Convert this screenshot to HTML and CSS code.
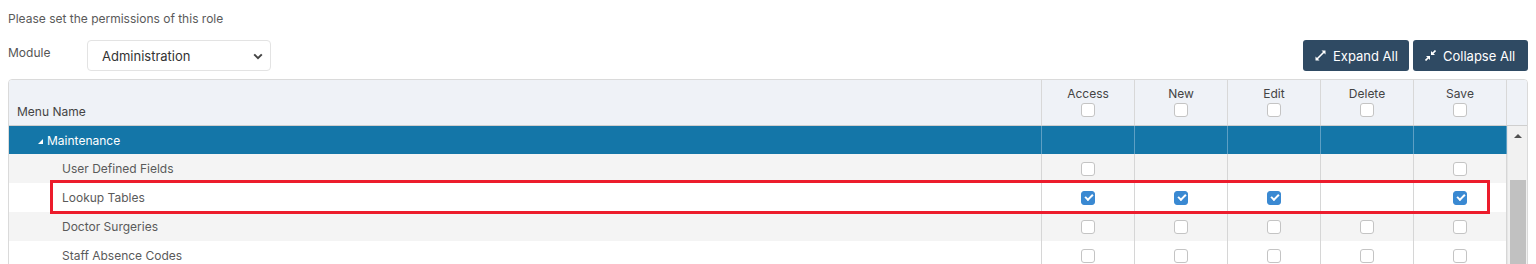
FILE: index.html
```html
<!DOCTYPE html>
<html>
<head>
<meta charset="utf-8">
<link rel="stylesheet" href="styles.css">
</head>
<body>
<p class="intro">Please set the permissions of this role</p>
<div class="toolbar">
  <label class="mod-label">Module</label>
  <div class="select">
    <span>Administration</span>
    <svg class="chev" width="10" height="7" viewBox="0 0 10 7"><path d="M1.2 1.4 L5 5.2 L8.8 1.4" fill="none" stroke="#444" stroke-width="2"/></svg>
  </div>
  <div class="spacer"></div>
  <button class="btn btn-expand">
    <svg width="11" height="11" viewBox="0 0 11 11"><path d="M6.5 0.5 H10.5 V4.5 Z M0.5 6.5 V10.5 H4.5 Z" fill="#fff"/><path d="M9 2 L2 9" stroke="#fff" stroke-width="1.6"/></svg>
    Expand All
  </button>
  <button class="btn btn-collapse">
    <svg width="11" height="11" viewBox="0 0 11 11"><path d="M6 1 V5 H10 Z M1 6 H5 V10 Z" fill="#fff"/><path d="M10.5 0.5 L7 4 M0.5 10.5 L4 7" stroke="#fff" stroke-width="1.6"/></svg>
    Collapse All
  </button>
</div>

<div class="grid">
  <div class="head">
    <div class="hcell name">Menu Name</div>
    <div class="hcell perm">Access<span class="cb"></span></div>
    <div class="hcell perm">New<span class="cb"></span></div>
    <div class="hcell perm">Edit<span class="cb"></span></div>
    <div class="hcell perm">Delete<span class="cb"></span></div>
    <div class="hcell perm">Save<span class="cb"></span></div>
    <div class="hcell gutter"></div>
  </div>
  <div class="body">
    <div class="rows">
      <div class="row group">
        <div class="cell name"><span class="tri"></span>Maintenance</div>
        <div class="cell"></div><div class="cell"></div><div class="cell"></div><div class="cell"></div><div class="cell"></div>
      </div>
      <div class="row alt">
        <div class="cell name child">User Defined Fields</div>
        <div class="cell"><span class="cb"></span></div><div class="cell"></div><div class="cell"></div><div class="cell"></div><div class="cell"><span class="cb"></span></div>
      </div>
      <div class="row hl">
        <div class="cell name child">Lookup Tables</div>
        <div class="cell"><span class="cb on"></span></div><div class="cell"><span class="cb on"></span></div><div class="cell"><span class="cb on"></span></div><div class="cell"></div><div class="cell"><span class="cb on"></span></div>
        <div class="redbox"></div>
      </div>
      <div class="row alt">
        <div class="cell name child">Doctor Surgeries</div>
        <div class="cell"><span class="cb"></span></div><div class="cell"><span class="cb"></span></div><div class="cell"><span class="cb"></span></div><div class="cell"><span class="cb"></span></div><div class="cell"><span class="cb"></span></div>
      </div>
      <div class="row">
        <div class="cell name child">Staff Absence Codes</div>
        <div class="cell"><span class="cb"></span></div><div class="cell"><span class="cb"></span></div><div class="cell"><span class="cb"></span></div><div class="cell"><span class="cb"></span></div><div class="cell"><span class="cb"></span></div>
      </div>
    </div>
    <div class="scrollbar">
      <div class="arrow"></div>
      <div class="thumb"></div>
    </div>
  </div>
</div>
</body>
</html>
```

FILE: styles.css
```css
* { box-sizing: border-box; }
html, body { margin: 0; padding: 0; background: #fff; }
body {
  padding: 0 8px;
  font-family: Inter, "Noto Sans", sans-serif;
  color: #444;
  overflow: hidden;
  height: 264px;
}
.intro {
  margin: 0;
  padding-top: 11px;
  font-size: 12px;
  line-height: 15px;
  color: #5a5a5a;
}
.toolbar {
  display: flex;
  align-items: center;
  margin-top: 14px;
  height: 31px;
}
.mod-label {
  width: 79px;
  font-size: 12px;
  color: #555;
  align-self: flex-start;
  padding-top: 5px;
}
.select {
  width: 184px;
  height: 31px;
  border: 1px solid #e3e3e3;
  border-radius: 4px;
  display: flex;
  align-items: center;
  justify-content: space-between;
  padding: 0 7px 0 14px;
  font-size: 13px;
  color: #333;
}
.chev { margin-top: 1px; }
.spacer { flex: 1; }
.btn {
  height: 31px;
  border: 0;
  border-radius: 3px;
  background: #2f4a63;
  color: #fff;
  font-family: Inter, "Noto Sans", sans-serif;
  font-size: 13px;
  display: flex;
  align-items: center;
  gap: 7px;
  padding: 0 0 0 12px;
}
.btn-expand { width: 106px; }
.btn-collapse { width: 115px; margin-left: 4px; }

.grid {
  margin-top: 8px;
  border: 1px solid #dadada;
  border-radius: 4px;
  overflow: hidden;
  width: 1520px;
}
.head {
  display: grid;
  grid-template-columns: 1033px repeat(5, 93px) 22px;
  background: #eff2f7;
  height: 46px;
  border-bottom: 1px solid #cfcfcf;
}
.hcell {
  border-right: 1px solid #d8d8d8;
  font-size: 12px;
  color: #444;
}
.hcell.name {
  display: flex;
  align-items: flex-end;
  padding: 0 0 6px 8px;
}
.hcell.perm {
  display: flex;
  flex-direction: column;
  align-items: center;
  padding-top: 6px;
  gap: 2px;
}
.hcell.gutter { border-right: 0; }

.body { display: flex; }
.rows { width: 1498px; }
.row {
  display: grid;
  grid-template-columns: 1033px repeat(5, 93px);
  height: 29px;
  position: relative;
  background: #fff;
}
.row.hl { z-index: 2; }
.row.alt { background: #f4f4f4; }
.row.group { background: #1476a8; height: 28px; color: #fff; }
.cell {
  border-right: 1px solid #d6d6d6;
  display: flex;
  align-items: center;
  justify-content: center;
}
.row.group .cell { border-right-color: #5d9fc4; }
.cell.name {
  justify-content: flex-start;
  font-size: 12px;
  color: #5a5a5a;
}
.row.group .cell.name { color: #fff; padding-left: 29px; }
.cell.child { padding-left: 53px; }
.tri {
  width: 0; height: 0;
  border-left: 5px solid transparent;
  border-bottom: 5px solid #fff;
  margin-right: 4px;
  margin-top: 2px;
}
.cb {
  display: inline-block;
  width: 14px;
  height: 14px;
  border: 1px solid #c4c4c4;
  border-radius: 3px;
  background: #fff;
  position: relative;
}
.cb.on {
  background: #3a89d2;
  border-color: #3a89d2;
}
.cb.on::after {
  content: "";
  position: absolute;
  left: 3px;
  top: 2px;
  width: 6px;
  height: 3px;
  border-left: 2px solid #fff;
  border-bottom: 2px solid #fff;
  transform: rotate(-45deg);
}
.redbox {
  position: absolute;
  left: 41px;
  top: -3px;
  width: 1440px;
  height: 34px;
  border: 3px solid #ec1c2c;
  pointer-events: none;
  z-index: 3;
}
.scrollbar {
  width: 20px;
  background: #f1f1f1;
  border-left: 1px solid #e6e6e6;
  display: flex;
  flex-direction: column;
  align-items: center;
}
.arrow {
  width: 0; height: 0;
  border-left: 4px solid transparent;
  border-right: 4px solid transparent;
  border-bottom: 4px solid #505050;
  margin-top: 8px;
}
.thumb {
  width: 16px;
  margin-top: 42px;
  flex: 1;
  height: 100px;
  background: #c1c1c1;
}
```
